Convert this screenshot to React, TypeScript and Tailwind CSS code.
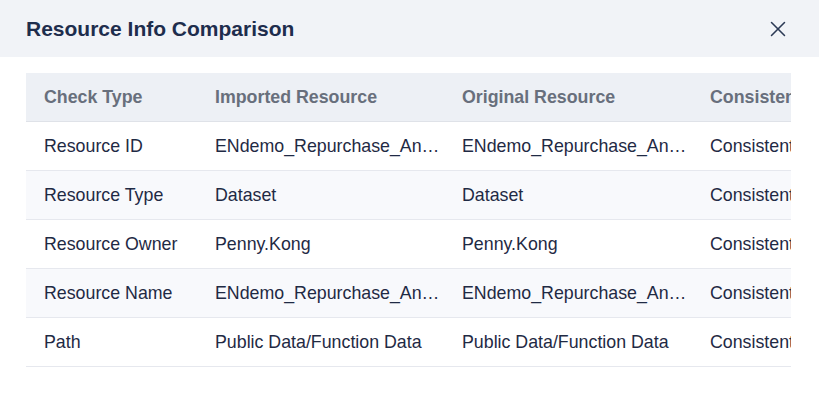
import { X } from "lucide-react";

const ROWS = [
  ["Resource ID", "ENdemo_Repurchase_Analysis_Dataset", "ENdemo_Repurchase_Analysis_Dataset", "Consistent"],
  ["Resource Type", "Dataset", "Dataset", "Consistent"],
  ["Resource Owner", "Penny.Kong", "Penny.Kong", "Consistent"],
  ["Resource Name", "ENdemo_Repurchase_Analysis_Dataset", "ENdemo_Repurchase_Analysis_Dataset", "Consistent"],
  ["Path", "Public Data/Function Data", "Public Data/Function Data", "Consistent"],
];

const HEADERS = ["Check Type", "Imported Resource", "Original Resource", "Consistency"];

export default function App() {
  return (
    <div
      className="w-[819px] h-[411px] bg-white overflow-hidden"
      style={{ fontFamily: '"Liberation Sans", Arial, sans-serif' }}
    >
      {/* Header */}
      <div className="h-[57px] bg-[#f1f3f7] flex items-center justify-between pl-[26px] pr-[28px]">
        <h2 className="text-[21px] font-bold text-[#1e2d4d]">Resource Info Comparison</h2>
        <button className="text-[#2c3a55]">
          <X size={26} strokeWidth={1.4} />
        </button>
      </div>

      {/* Table */}
      <div className="pl-[26px] pr-[28px] pt-[16px]">
        <div className="w-[765px] overflow-hidden">
          <table className="table-fixed border-collapse w-[866px] text-[17.8px]">
            <colgroup>
              <col className="w-[171px]" />
              <col className="w-[247px]" />
              <col className="w-[248px]" />
              <col className="w-[200px]" />
            </colgroup>
            <thead>
              <tr className="bg-[#edf0f5] border-b border-[#dfe2e8]">
                {HEADERS.map((h) => (
                  <th
                    key={h}
                    className="h-[48px] pl-[18px] pr-1 pt-[2px] text-left font-bold text-[#686f7c] whitespace-nowrap overflow-hidden"
                  >
                    {h}
                  </th>
                ))}
              </tr>
            </thead>
            <tbody>
              {ROWS.map((row, i) => (
                <tr
                  key={row[0]}
                  className={`border-b border-[#e6e8ee] ${i % 2 === 1 ? "bg-[#f8f9fc]" : "bg-white"}`}
                >
                  {row.map((cell, j) => (
                    <td
                      key={j}
                      className="h-[49px] pl-[18px] pr-1 pt-[2px] text-[#1f2a44] whitespace-nowrap overflow-hidden text-ellipsis"
                    >
                      {cell}
                    </td>
                  ))}
                </tr>
              ))}
            </tbody>
          </table>
        </div>
      </div>
    </div>
  );
}
